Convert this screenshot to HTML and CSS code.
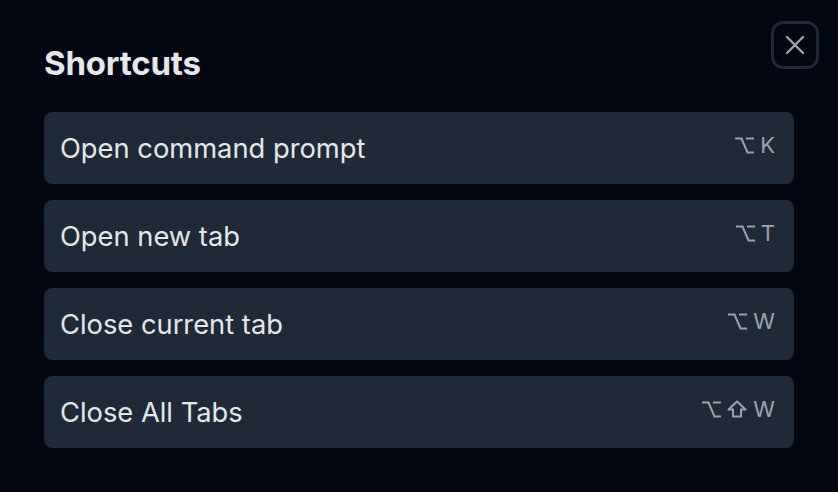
FILE: index.html
```html
<!DOCTYPE html>
<html lang="en">
<head>
<meta charset="utf-8">
<title>Shortcuts</title>
<link rel="stylesheet" href="styles.css">
</head>
<body>
<div class="dialog">
  <button class="close" aria-label="Close">
    <svg width="20" height="20" viewBox="0 0 20 20" fill="none" stroke="currentColor" stroke-width="2.4" stroke-linecap="round"><path d="M2 2L18 18M18 2L2 18"/></svg>
  </button>
  <h1 class="title">Shortcuts</h1>
  <ul class="list">
    <li class="row"><span class="label">Open command prompt</span><span class="keys"><svg class="opt" width="19" height="17" viewBox="0 0 19 17" fill="none" stroke="currentColor" stroke-width="2"><path d="M0 1.5H6.5L12.5 15.5H19M11 1.5H19"/></svg><kbd>K</kbd></span></li>
    <li class="row"><span class="label">Open new tab</span><span class="keys"><svg class="opt" width="19" height="17" viewBox="0 0 19 17" fill="none" stroke="currentColor" stroke-width="2"><path d="M0 1.5H6.5L12.5 15.5H19M11 1.5H19"/></svg><kbd>T</kbd></span></li>
    <li class="row"><span class="label">Close current tab</span><span class="keys"><svg class="opt" width="19" height="17" viewBox="0 0 19 17" fill="none" stroke="currentColor" stroke-width="2"><path d="M0 1.5H6.5L12.5 15.5H19M11 1.5H19"/></svg><kbd>W</kbd></span></li>
    <li class="row"><span class="label">Close All Tabs</span><span class="keys"><svg class="opt" width="19" height="17" viewBox="0 0 19 17" fill="none" stroke="currentColor" stroke-width="2"><path d="M0 1.5H6.5L12.5 15.5H19M11 1.5H19"/></svg><svg class="shift" width="20" height="18" viewBox="0 0 20 18" fill="none" stroke="currentColor" stroke-width="2" stroke-linejoin="round"><path d="M10 1.5L18.5 9.5H14V16.5H6V9.5H1.5Z"/></svg><kbd>W</kbd></span></li>
  </ul>
</div>
</body>
</html>
```
FILE: styles.css
```css
html, body {
  margin: 0;
  padding: 0;
  background: #030712;
  height: 100%;
}
body {
  font-family: Inter, "Noto Sans", "DejaVu Sans", sans-serif;
  color: #e5e7eb;
}
.dialog {
  position: relative;
  padding: 40px 44px 0 44px;
}
.close {
  position: absolute;
  top: 21px;
  right: 19px;
  width: 48px;
  height: 48px;
  box-sizing: border-box;
  border: 3px solid #1f2937;
  border-radius: 12px;
  background: transparent;
  color: #9ca3af;
  display: flex;
  align-items: center;
  justify-content: center;
  padding: 0;
}
.title {
  margin: 0 0 26px 0;
  font-size: 33px;
  font-weight: 700;
  line-height: 46px;
  letter-spacing: -0.2px;
  color: #e5e7eb;
}
.list {
  list-style: none;
  margin: 0;
  padding: 0;
  display: flex;
  flex-direction: column;
  gap: 16px;
}
.row {
  height: 72px;
  box-sizing: border-box;
  background: #1f2937;
  border-radius: 8px;
  padding: 0 19px 0 16px;
  display: flex;
  align-items: center;
  justify-content: space-between;
}
.label {
  font-size: 27.3px;
  color: #e5e7eb;
}
.keys {
  display: flex;
  align-items: center;
  gap: 6px;
  margin-top: -6px;
  color: #9ca3af;
  font-size: 22px;
  line-height: 22px;
}
kbd {
  font-family: Inter, "DejaVu Sans", sans-serif;
}
.opt, .shift {
  display: block;
}
```
